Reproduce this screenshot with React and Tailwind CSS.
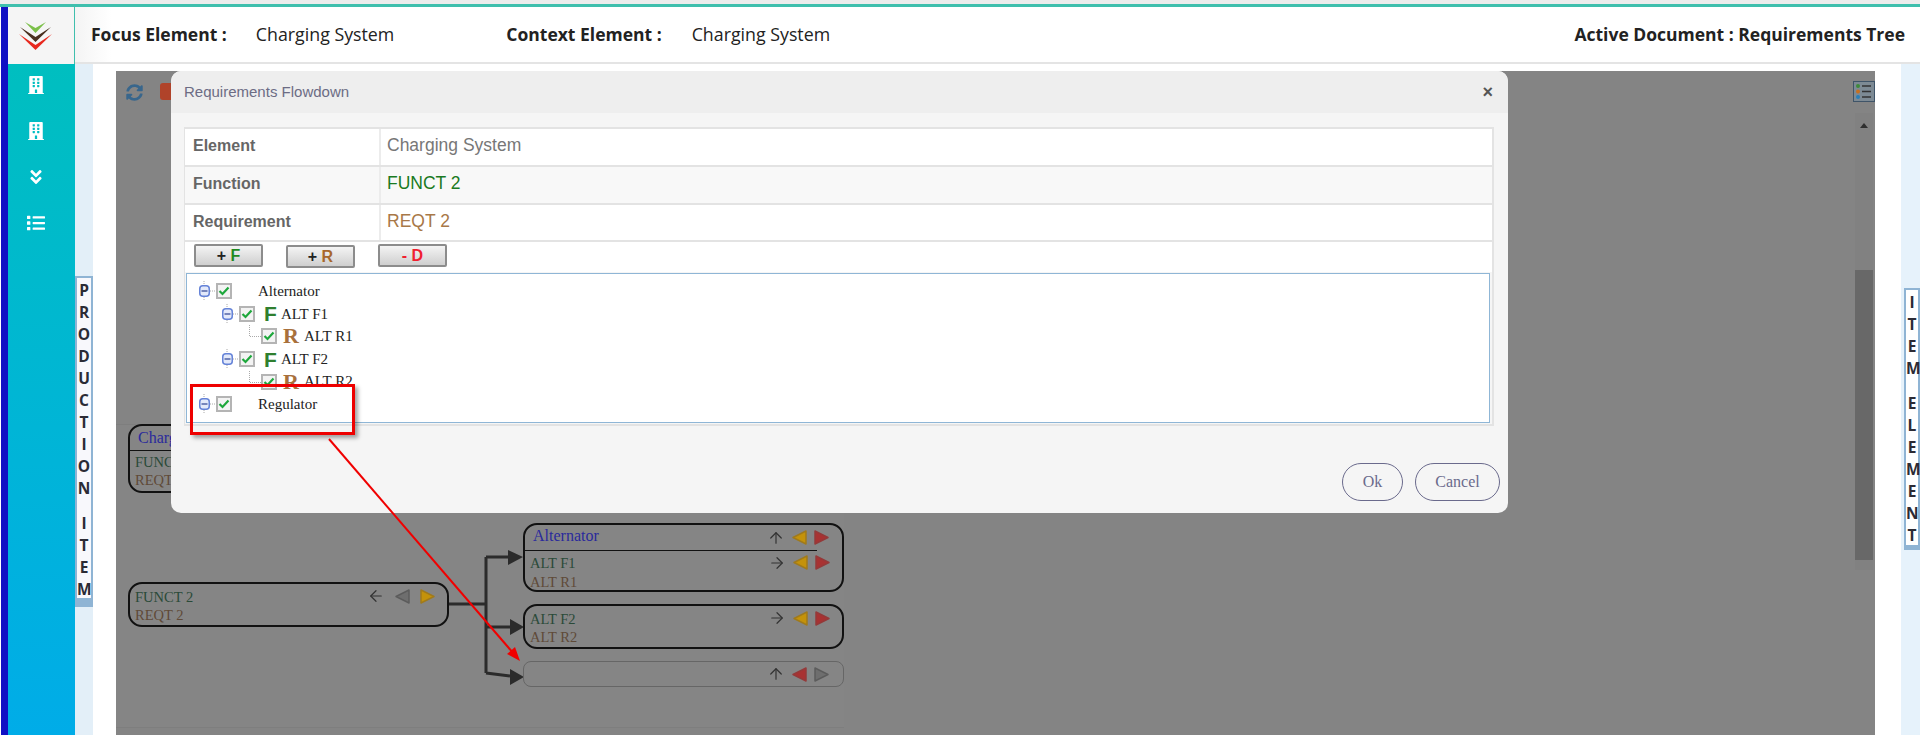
import { ArrowLeft, ArrowRight, ArrowUp } from "lucide-react";
import { FaBuilding, FaAngleDoubleDown, FaList, FaSyncAlt } from "react-icons/fa";

const VerticalLabel = ({ groups, className }) => (
  <div className={className}>
    {groups.map((word, i) => (
      <div key={i} className={i > 0 ? "mt-[13px]" : ""}>
        {word.split("").map((ch, j) => (
          <div key={j} className="h-[22px] text-center text-[15.5px] font-bold leading-[22px] text-[#2b2b35]">
            {ch}
          </div>
        ))}
      </div>
    ))}
  </div>
);

const Tri = ({ dir, color }) => {
  const fills = {
    yellow: ["#c4920a", "#a07a1c"],
    red: ["#a83232", "#943a3a"],
    gray: ["#6e6e6e", "#5c5c5c"],
  };
  const [fill, stroke] = fills[color];
  return (
    <svg width="15" height="15" viewBox="0 0 15 15">
      <polygon
        points={dir === "left" ? "14,1 14,14 1,7.5" : "1,1 1,14 14,7.5"}
        fill={fill}
        stroke={stroke}
        strokeWidth="1.5"
        strokeLinejoin="round"
      />
    </svg>
  );
};

const Controls = ({ arrow: Arrow, left, right, className = "" }) => (
  <div className={"flex items-center gap-[7px] " + className}>
    <Arrow size={18} color="#333" strokeWidth={1.6} />
    <Tri dir="left" color={left} />
    <Tri dir="right" color={right} />
  </div>
);

const Expander = () => (
  <svg width="17" height="22" viewBox="0 0 17 22" className="shrink-0">
    <path d="M5 1v4M5 17v4M11 11h6" stroke="#aaa" strokeWidth="1" strokeDasharray="1 1" fill="none" />
    <rect x="0.75" y="5.75" width="9.5" height="10.5" rx="3" fill="#e3e9fa" stroke="#6583d8" strokeWidth="1.5" />
    <path d="M2.5 11h6" stroke="#3c4f9a" strokeWidth="1.3" />
  </svg>
);

const Check = () => (
  <span className="flex h-[16px] w-[16px] shrink-0 items-center justify-center border-2 border-[#b4b4b4] bg-[#f3f3f3]">
    <svg width="12" height="10" viewBox="0 0 12 10">
      <path d="M1.5 5l3 3 6-6.5" fill="none" stroke="#1ea83c" strokeWidth="2.2" />
    </svg>
  </span>
);

const treeRows = [
  { level: 0, text: "Alternator" },
  { level: 1, kind: "F", text: "ALT F1" },
  { level: 2, kind: "R", text: "ALT R1" },
  { level: 1, kind: "F", text: "ALT F2" },
  { level: 2, kind: "R", text: "ALT R2" },
  { level: 0, text: "Regulator" },
];

const TreeRow = ({ level, kind, text }) => {
  if (level === 2) {
    return (
      <div className="flex h-[22.6px] items-center pl-[62px]">
        <svg width="12" height="22" viewBox="0 0 12 22" className="shrink-0">
          <path d="M0.5 0v11.5h12" fill="none" stroke="#aaa" strokeDasharray="1 1" />
        </svg>
        <Check />
        <span className="ml-[6px] w-[16px] font-['Liberation_Serif',serif] text-[22px] font-bold leading-none text-[#a8703c]">{kind}</span>
        <span className="ml-[5px] text-[15px] text-[#222]">{text}</span>
      </div>
    );
  }
  if (level === 1) {
    return (
      <div className="flex h-[22.6px] items-center pl-[35px]">
        <Expander />
        <Check />
        <span className="ml-[9px] w-[12px] font-['Liberation_Sans',sans-serif] text-[21px] font-bold leading-none text-[#2f7f2f]">{kind}</span>
        <span className="ml-[5px] text-[15px] text-[#222]">{text}</span>
      </div>
    );
  }
  return (
    <div className="flex h-[22.6px] items-center pl-[12px]">
      <Expander />
      <Check />
      <span className="ml-[26px] text-[15px] text-[#222]">{text}</span>
    </div>
  );
};

const Modal = () => (
  <div className="absolute left-[171px] top-[71px] flex h-[442px] w-[1337px] flex-col rounded-[10px] bg-[#f5f5f5] font-['Liberation_Sans',sans-serif]">
    <div className="flex h-[42px] shrink-0 items-center justify-between rounded-t-[10px] bg-[#eeeeee] pl-[13px] pr-[15px]">
      <span className="text-[15px] text-[#6c6c84]">Requirements Flowdown</span>
      <span className="text-[18px] font-bold leading-none text-[#555]">×</span>
    </div>
    <div className="ml-[13px] mr-[14px] mt-[14px] border-r-2 border-t-2 border-b-2 border-l border-[#e3e3e3]">
      <div className="grid h-[36px] grid-cols-[196px_1fr] bg-white">
        <div className="flex items-center border-r-2 border-[#ececec] pb-[2px] pl-[8px] text-[16px] font-bold text-[#666]">Element</div>
        <div className="flex items-center pb-[3px] pl-[6px] text-[17.5px] text-[#777]">Charging System</div>
      </div>
      <div className="grid h-[38px] grid-cols-[196px_1fr] border-t-2 border-[#e3e3e3] bg-[#f8f8f8]">
        <div className="flex items-center border-r-2 border-[#ececec] pb-[2px] pl-[8px] text-[16px] font-bold text-[#666]">Function</div>
        <div className="flex items-center pb-[3px] pl-[6px] text-[17.5px] text-[#1a7a22]">FUNCT 2</div>
      </div>
      <div className="grid h-[37px] grid-cols-[196px_1fr] border-t-2 border-[#e3e3e3] bg-white">
        <div className="flex items-center border-r-2 border-[#ececec] pb-[1px] pl-[8px] text-[16px] font-bold text-[#666]">Requirement</div>
        <div className="flex items-center pb-[3px] pl-[6px] text-[17.5px] text-[#a87848]">REQT 2</div>
      </div>
      <div className="flex h-[32px] items-start gap-[23px] border-t-2 border-[#e3e3e3] bg-white pl-[9px] pt-[2px]">
        <button className="h-[23px] w-[69px] rounded-[2px] border-2 border-[#8c8c8c] bg-gradient-to-b from-[#f4f4f4] to-[#cfcfcf] text-[16px] font-bold leading-none text-[#222]">
          + <span className="text-[#1f8a1f]">F</span>
        </button>
        <button className="mt-px h-[23px] w-[69px] rounded-[2px] border-2 border-[#8c8c8c] bg-gradient-to-b from-[#f4f4f4] to-[#cfcfcf] text-[16px] font-bold leading-none text-[#222]">
          + <span className="text-[#a8682c]">R</span>
        </button>
        <button className="h-[23px] w-[69px] rounded-[2px] border-2 border-[#8c8c8c] bg-gradient-to-b from-[#f4f4f4] to-[#cfcfcf] text-[16px] font-bold leading-none text-[#f02030]">
          - D
        </button>
      </div>
      <div className="h-[152px] bg-[#f5f5f5] pl-[1px] pr-[2px] pt-[1px]">
        <div className="h-[150px] border border-[#8fb6d6] bg-white pt-[6px] font-['Liberation_Serif',serif]">
          {treeRows.map((row) => (
            <TreeRow key={row.text} {...row} />
          ))}
        </div>
      </div>
    </div>
    <div className="mt-auto flex justify-end gap-[12px] pb-[12px] pr-[8px] font-['Liberation_Serif',serif] text-[16px] text-[#6a6a8c]">
      <button className="h-[38px] w-[61px] rounded-full border border-[#6a6a8c]">Ok</button>
      <button className="h-[38px] w-[85px] rounded-full border border-[#6a6a8c]">Cancel</button>
    </div>
  </div>
);

const Diagram = () => (
  <div className="absolute inset-0 font-['Liberation_Serif',serif]">
    <div className="absolute left-0 top-[353px] h-[304px] w-[728px] border-t border-b border-[#7e7e7e] bg-[#858585]" />

    <svg className="absolute left-0 top-0" width="800" height="664" viewBox="116 71 800 664">
      <g fill="none" stroke="#2b2b2b" strokeWidth="3">
        <path d="M449 604H486M486 557V673M486 557H510M486 627H510M486 673L510 676" />
      </g>
      <g fill="#2b2b2b">
        <polygon points="508,550 523,557 508,565" />
        <polygon points="510,619 524,627 510,635" />
        <polygon points="510,669 524,677 510,685" />
      </g>
    </svg>

    <div className="absolute left-[12px] top-[353px] h-[69px] w-[300px] rounded-[14px] border-2 border-[#111]">
      <div className="h-[24px] pl-[8px] text-[16px] leading-[24px] text-[#2a2a9c]">Charging System</div>
      <div className="h-px bg-[#111]" />
      <div className="pl-[5px] pt-[2px] text-[14.5px] leading-[18px] text-[#2a4a38]">FUNCT 2</div>
      <div className="pl-[5px] text-[14.5px] leading-[18px] text-[#5f4a38]">REQT 2</div>
    </div>

    <div className="absolute left-[12px] top-[511px] flex h-[45px] w-[321px] justify-between rounded-[14px] border-2 border-[#111] pl-[5px] pr-[12px] pt-[4px]">
      <div className="text-[14.5px] leading-[18px]">
        <div className="text-[#2a4a38]">FUNCT 2</div>
        <div className="text-[#5f4a38]">REQT 2</div>
      </div>
      <div className="flex h-[16px] items-center gap-[10px]">
        <ArrowLeft size={18} color="#333" strokeWidth={1.6} />
        <Tri dir="left" color="gray" />
        <Tri dir="right" color="yellow" />
      </div>
    </div>

    <div className="absolute left-[407px] top-[452px] h-[69px] w-[321px] rounded-[14px] border-2 border-[#111]">
      <div className="flex h-[25px] items-center justify-between pb-[3px] pl-[8px] pr-[13px] text-[16px] text-[#2a2a9c]">
        Alternator
        <Controls arrow={ArrowUp} left="yellow" right="red" className="mt-[3px]" />
      </div>
      <div className="h-px w-[292px] bg-[#111]" />
      <div className="flex h-[22px] items-center justify-between pl-[5px] pr-[12px] pt-[4px] text-[14.5px] text-[#2a4a38]">
        ALT F1
        <Controls arrow={ArrowRight} left="yellow" right="red" className="-mt-[3px]" />
      </div>
      <div className="pl-[5px] text-[14.5px] leading-[18px] text-[#5f4a38]">ALT R1</div>
    </div>

    <div className="absolute left-[407px] top-[533px] flex h-[45px] w-[321px] justify-between rounded-[14px] border-2 border-[#111] pl-[5px] pr-[12px] pt-[4px]">
      <div className="text-[14.5px] leading-[18px]">
        <div className="text-[#2a4a38]">ALT F2</div>
        <div className="text-[#5f4a38]">ALT R2</div>
      </div>
      <Controls arrow={ArrowRight} left="yellow" right="red" className="h-[16px]" />
    </div>

    <div className="absolute left-[407px] top-[590px] flex h-[26px] w-[321px] items-center justify-end rounded-[8px] border border-[#666] pr-[14px]">
      <Controls arrow={ArrowUp} left="red" right="gray" />
    </div>
  </div>
);

const Canvas = () => (
  <div className="relative mt-[7px] flex-1 bg-[#848484]">
    <div className="absolute left-[10px] top-[13px] text-[#38668c]">
      <FaSyncAlt size={17} />
    </div>
    <div className="absolute left-[44px] top-[12px] h-[17px] w-[17px] rounded-[3px] bg-[#b0432a]" />
    <svg className="absolute right-0 top-[10px]" width="22" height="21" viewBox="0 0 22 21">
      <rect x="0.5" y="0.5" width="21" height="20" fill="#7d8a94" stroke="#3f5468" />
      <circle cx="5" cy="5" r="2" fill="#3f8a3a" />
      <circle cx="5" cy="10.5" r="2" fill="#c8701e" />
      <circle cx="5" cy="16" r="2" fill="#2a7fb8" />
      <path d="M9 5h9M9 10.5h9M9 16h9" stroke="#333" strokeWidth="1.4" />
    </svg>
    <div className="absolute right-[2px] top-[42px] h-[457px] w-[18px] bg-[#818181]">
      <div className="mx-auto mt-[10px] h-0 w-0 border-x-[4px] border-b-[5px] border-x-transparent border-b-[#2f2f2f]" />
      <div className="mt-[142px] h-[290px] bg-[#686868]" />
    </div>
    <Diagram />
  </div>
);

export default function App() {
  return (
    <div className="relative h-[735px] w-[1920px] overflow-hidden bg-white font-['Open_Sans',sans-serif]">
      <div className="h-[4px] bg-[#ececec]" />
      <div className="h-[3px] bg-[#3fbfad]" />
      <div className="flex h-[728px]">
        <div className="ml-px w-[7px] bg-[#1010c4]" />
        <aside className="flex w-[67px] flex-col bg-gradient-to-b from-[#00c0bc] to-[#00ace8]">
          <div className="flex h-[57px] items-center border-r border-[#3fbfad] bg-[#f5f5f5]">
            <svg width="55" height="57" viewBox="0 0 55 57">
              <polygon points="17,15 27.5,21 38,15 27.5,26" fill="#7cc04a" />
              <polygon points="12,20 27.5,30 43,20 27.5,35" fill="#4a3020" />
              <polygon points="11,27 27.5,38 44,27 27.5,43" fill="#e8281e" />
            </svg>
          </div>
          <div className="flex w-[55px] flex-col items-center gap-[28px] pt-[12px] text-white">
            <FaBuilding size={18} />
            <FaBuilding size={18} />
            <FaAngleDoubleDown size={18} />
            <FaList size={18} />
          </div>
        </aside>
        <div className="flex flex-1 flex-col">
          <header className="flex h-[57px] shrink-0 items-center border-b-2 border-[#e4e4e4] bg-gradient-to-r from-[#f4f4f4] via-white via-[2%] to-white pl-[16px] pr-[15px] text-[17.8px] text-[#222]">
            <b className="text-[17.5px]">Focus Element :</b>
            <span className="ml-[29px]">Charging System</span>
            <b className="ml-[112px] text-[17.5px]">Context Element :</b>
            <span className="ml-[30px]">Charging System</span>
            <b className="ml-auto text-[17.5px]">Active Document : Requirements Tree</b>
          </header>
          <div className="flex flex-1">
            <div className="w-[18px] bg-[#e3eff8] pt-[212px]">
              <VerticalLabel
                groups={["PRODUCTION", "ITEM"]}
                className="h-[331px] border-x-2 border-t-2 border-b-[9px] border-[#8fb4d4] bg-[#f8f8fc] pt-[1px]"
              />
            </div>
            <div className="w-[23px]" />
            <Canvas />
            <div className="w-[26px]" />
            <div className="w-[19px] bg-[#e6f2fb] pl-[3px] pt-[224px]">
              <VerticalLabel
                groups={["ITEM", "ELEMENT"]}
                className="h-[262px] border-x-2 border-t-2 border-b-[5px] border-[#8fb4d4] bg-white pt-[1px]"
              />
            </div>
          </div>
        </div>
      </div>
      <Modal />
      <div className="absolute left-[190px] top-[384px] h-[51px] w-[165px] border-[3px] border-[#ee0000] shadow-[3px_3px_4px_rgba(0,0,0,0.35)]" />
      <svg className="absolute left-0 top-0" width="1920" height="735" viewBox="0 0 1920 735" pointerEvents="none">
        <path d="M329 439L514 654" stroke="#f00000" strokeWidth="2" />
        <polygon points="520,661 507,654 515,647" fill="#f00000" />
      </svg>
    </div>
  );
}
